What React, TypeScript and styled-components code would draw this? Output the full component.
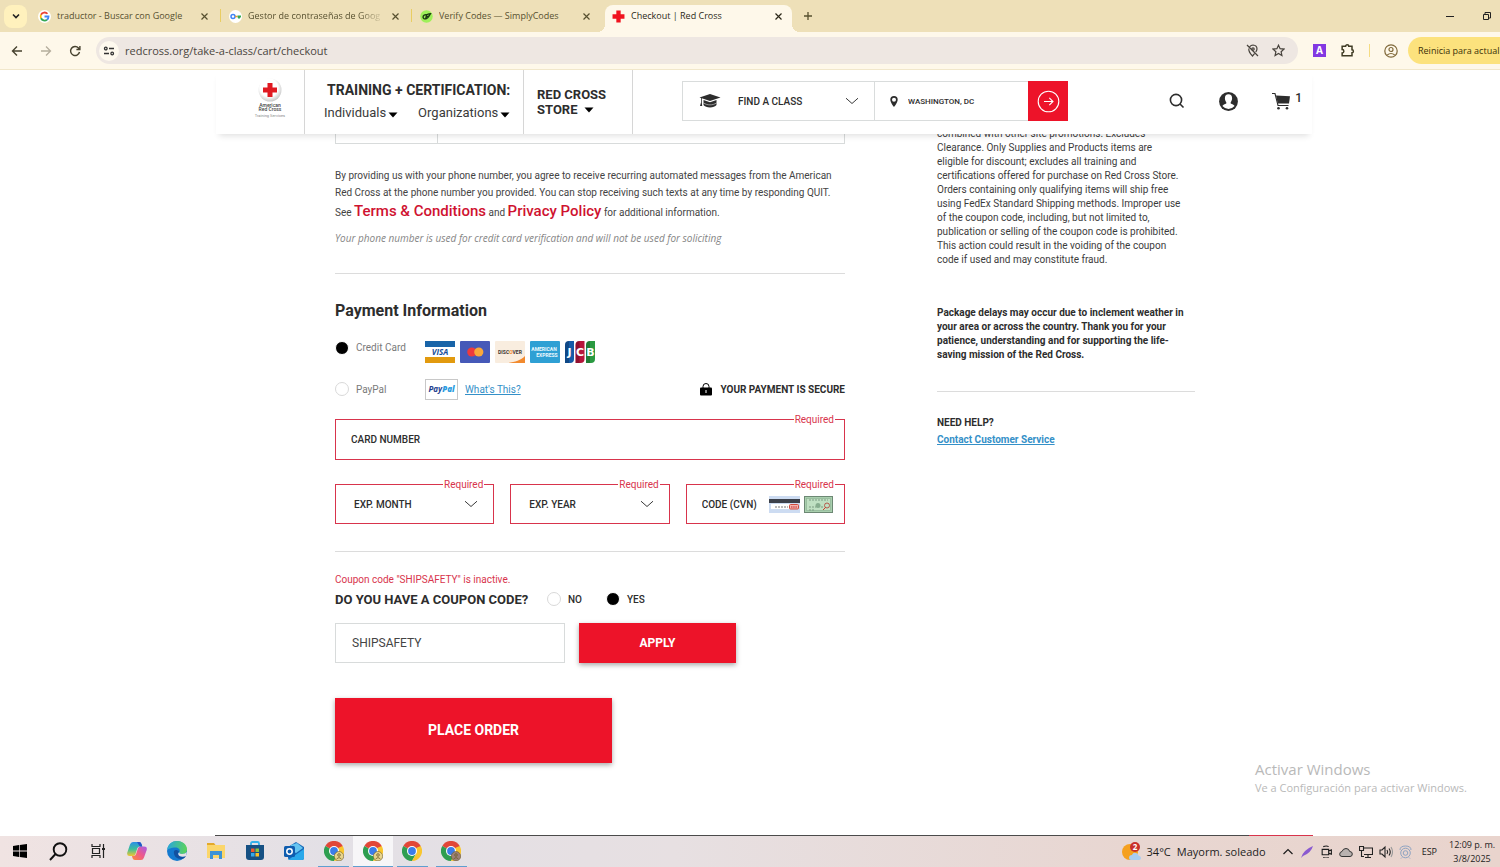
import React from "react";
import styled, { createGlobalStyle, css } from "styled-components";

const ui = `"Open Sans", "Noto Sans", sans-serif`;
const red = "#ed1329";
const errorRed = "#d8344c";
const ink = "#2d2d2d";

const GlobalStyle = createGlobalStyle`
  *, *::before, *::after { box-sizing: border-box; }
  body { margin: 0; background: #fff; font-family: Roboto, sans-serif; color: ${ink}; }
  button, input, select { font: inherit; color: inherit; }
  button { border: 0; padding: 0; background: none; cursor: pointer; }
  h1, h2, p, fieldset { margin: 0; padding: 0; border: 0; }
  svg { display: block; flex: none; }
`;

const Screen = styled.div`
  display: flex;
  flex-direction: column;
  height: 100vh;
  overflow: hidden;
`;

/* Browser chrome */

const TabStrip = styled.div`
  display: flex;
  align-items: center;
  height: 32px;
  flex: none;
  padding: 0 8px 0 4px;
  background: #eee0b8;
  font: 9px/14px ${ui};
  color: #57502f;
`;

const TabMenu = styled.button`
  display: grid;
  place-items: center;
  width: 23px;
  height: 23px;
  border-radius: 8px;
  background: #fff1bd;
  margin-right: 3px;
`;

const TabList = styled.div`
  display: flex;
  flex: 0 1 762px;
  align-self: stretch;
  align-items: flex-end;
`;

const Tab = styled.div<{ $active?: boolean }>`
  position: relative;
  display: flex;
  align-items: center;
  gap: 6px;
  flex: 1 1 0;
  min-width: 0;
  height: 27px;
  padding: 0 11px 5px 8px;
  ${(p) =>
    p.$active &&
    css`
      flex: 0 1 187px;
      margin-left: 3px;
      padding: 0 9px 5px 7px;
      background: #fef8ea;
      border-radius: 8px 8px 0 0;
      color: #2c2818;
      &::before,
      &::after {
        content: "";
        position: absolute;
        bottom: 0;
        width: 8px;
        height: 8px;
      }
      &::before {
        left: -8px;
        background: radial-gradient(circle at 0 0, transparent 8px, #fef8ea 8px);
      }
      &::after {
        right: -8px;
        background: radial-gradient(circle at 100% 0, transparent 8px, #fef8ea 8px);
      }
    `}
`;

const TabTitle = styled.span<{ $fade?: boolean }>`
  flex: 1;
  white-space: nowrap;
  overflow: hidden;
  ${(p) =>
    p.$fade && "mask-image: linear-gradient(90deg, #000 110px, transparent 137px);"}
`;

const TabDivider = styled.span`
  width: 1px;
  height: 13px;
  margin-bottom: 10px;
  background: #e9cd62;
`;

const NewTab = styled.button`
  margin-left: 7px;
  padding: 4px;
`;

const WindowButtons = styled.div`
  display: flex;
  gap: 27px;
  margin-left: auto;
`;

const Toolbar = styled.div`
  display: flex;
  align-items: center;
  flex: none;
  height: 38px;
  padding-left: 11px;
  background: #fef8ea;
  border-bottom: 1px solid #f1e7cb;
  font-family: ${ui};
`;

const NavButtons = styled.div`
  display: flex;
  gap: 17px;
  margin-right: 15px;
`;

const Omnibox = styled.div`
  display: flex;
  align-items: center;
  flex: 1;
  gap: 6px;
  height: 27px;
  padding: 0 13px 0 3px;
  border-radius: 14px;
  background: #eee7e2;
`;

const SiteInfo = styled.button`
  display: grid;
  place-items: center;
  width: 20px;
  height: 20px;
  border-radius: 50%;
  background: #fef9ee;
`;

const Address = styled.input`
  flex: 1;
  min-width: 0;
  border: 0;
  padding: 0;
  background: transparent;
  font-size: 11px;
  color: #4b4640;
  outline: 0;
`;

const OmniActions = styled.div`
  display: flex;
  gap: 13px;
`;

const Extensions = styled.div`
  display: flex;
  align-items: center;
  gap: 14px;
  padding: 0 10px 0 15px;
`;

const ExtensionBadge = styled.button`
  width: 13px;
  height: 13px;
  background: #8338e2;
  color: #fff;
  font: 700 10px/13px ${ui};
`;

const ToolbarDivider = styled.span`
  width: 1px;
  height: 13px;
  background: #f5dc83;
`;

const Restart = styled.button`
  height: 27px;
  width: 92px;
  padding-left: 10px;
  border-radius: 14px 0 0 14px;
  background: #fce27d;
  font-size: 9px;
  text-align: left;
  white-space: nowrap;
  color: #3b3108;
`;

/* Site */

const Site = styled.div`
  position: relative;
  flex: 1;
  min-height: 0;
  display: flex;
  flex-direction: column;
  padding-left: 28px;
  overflow: hidden;
`;

const SiteHeader = styled.header`
  position: relative;
  z-index: 1;
  display: flex;
  flex: none;
  width: 100%;
  max-width: 1096px;
  height: 64px;
  margin: 0 auto;
  background: #fff;
  box-shadow: 0 5px 6px -3px rgba(0, 0, 0, 0.12);
`;

const Logo = styled.a`
  display: flex;
  flex-direction: column;
  align-items: center;
  width: 88px;
  padding: 8px 0 0 20px;
`;

const NavBlock = styled.div`
  width: 219px;
  padding: 11px 0 0 19px;
  border-left: 1px solid #d6d6d6;
`;

const NavHeading = styled.div`
  padding-left: 3px;
  font: 700 14px/18px Roboto, sans-serif;
  white-space: nowrap;
`;

const NavLinks = styled.div`
  display: flex;
  gap: 20px;
  margin-top: 5px;
`;

const NavButton = styled.button`
  display: flex;
  align-items: center;
  gap: 2px;
  font-size: 13px;
  line-height: 18px;
  color: #3a3a3a;
  svg { margin-top: 3px; }
`;

const StoreButton = styled.button`
  width: 110px;
  padding: 0 13px;
  border: solid #d6d6d6;
  border-width: 0 1px;
  text-align: left;
  font-size: 13px;
  font-weight: 700;
  line-height: 15px;
  white-space: nowrap;
  svg { display: inline-block; margin: 0 0 1px 3px; }
`;

const ClassSearch = styled.form`
  display: flex;
  align-items: stretch;
  width: 386px;
  height: 40px;
  margin: 11px 0 0 49px;
`;

const SearchPart = styled.label<{ $width: number }>`
  display: flex;
  align-items: center;
  width: ${(p) => p.$width}px;
  padding: 0 15px;
  border: solid #d9dcdc;
  border-width: 1px 0 1px 1px;
`;

const ClassSelect = styled.select`
  flex: 1;
  appearance: none;
  border: 0;
  padding: 0 0 0 16px;
  background: transparent;
  font-size: 10px;
  font-weight: 500;
  outline: 0;
`;

const PlaceInput = styled.input`
  width: 100%;
  border: 0;
  padding: 0 0 0 10px;
  background: transparent;
  font-size: 8px;
  font-weight: 500;
  outline: 0;
`;

const SearchButton = styled.button`
  display: grid;
  place-items: center;
  width: 40px;
  background: ${red};
`;

const HeaderIcons = styled.div`
  display: flex;
  align-items: flex-start;
  gap: 34px;
  margin: 22px 10px 0 auto;
`;

const CartButton = styled.button`
  display: flex;
  gap: 4px;
  font-size: 12px;
  font-weight: 500;
  line-height: 12px;
`;

const Content = styled.div`
  display: flex;
  justify-content: space-between;
  flex: 1;
  width: 100%;
  max-width: 1096px;
  margin: -8px auto 0;
  padding: 0 117px 0 119px;
`;

const Main = styled.main`
  width: 510px;
  font-size: 10px;
  line-height: 17px;
`;

const PhoneField = styled.div`
  display: flex;
  height: 18px;
  border: 1px solid #d8dbdb;
  border-top: 0;
  &::before {
    content: "";
    width: 102px;
    border-right: 1px solid #d8dbdb;
  }
`;

const Consent = styled.p`
  margin-top: 23px;
  white-space: nowrap;
  color: #444;
`;

const TermsLink = styled.a`
  font-size: 15px;
  font-weight: 500;
  line-height: 20px;
  color: #cf1230;
  text-decoration: none;
`;

const PhoneNote = styled.p`
  margin: 9px 0 26px;
  font: italic 10px/17px ${ui};
  color: #858585;
`;

const Divider = styled.hr`
  height: 1px;
  border: 0;
  margin: 0;
  background: #dcdcdc;
`;

const Title = styled.h2`
  margin: 27px 0 20px;
  font-size: 16px;
  line-height: 20px;
`;

const CardRow = styled.div`
  display: flex;
  align-items: flex-start;
  height: 22px;
  line-height: 14px;
`;

const PaypalRow = styled.div`
  display: flex;
  align-items: center;
  height: 22px;
  margin: 15px 0 19px;
`;

const Choice = styled.label<{ $width: number }>`
  display: flex;
  align-items: center;
  gap: 7px;
  width: ${(p) => p.$width}px;
`;

const PaymentChoice = styled(Choice)`
  color: #7a7a7a;
`;

const Radio = styled.input.attrs({ type: "radio" })`
  appearance: none;
  width: 14px;
  height: 14px;
  margin: 0;
  border: 1px solid #d9d9d9;
  border-radius: 50%;
  background: #fff;
  &:checked {
    border-color: #fff;
    background: #000;
  }
`;

const Cards = styled.div`
  display: flex;
  gap: 5px;
`;

const PaypalBadge = styled.span`
  width: 33px;
  height: 21px;
  margin-right: 7px;
  border: 1px solid #c8c8c8;
  font: italic 700 8px/18px ${ui};
  text-align: center;
  color: #1e3f8f;
  b { color: #2a9be0; }
`;

const BlueLink = styled.a`
  color: #3490c8;
  text-decoration: underline;
`;

const Secure = styled.strong`
  display: flex;
  align-items: center;
  gap: 8px;
  margin-left: auto;
`;

const FieldRow = styled.div`
  display: grid;
  grid-template-columns: repeat(3, minmax(0, 1fr));
  gap: 16px;
  margin: 24px 0 27px;
`;

const Field = styled.div<{ $select?: boolean }>`
  position: relative;
  display: flex;
  align-items: center;
  height: ${(p) => (p.$select === undefined ? 41 : 40)}px;
  padding: ${(p) => (p.$select ? "0 15px 0 18px" : "0 11px 0 15px")};
  border: 1px solid ${errorRed};
`;

const Required = styled.label`
  position: absolute;
  top: -9px;
  right: 9px;
  padding: 0 1px;
  background: #fff;
  color: ${errorRed};
`;

const fieldText = css`
  flex: 1;
  min-width: 0;
  border: 0;
  padding: 0;
  background: transparent;
  font-weight: 500;
  outline: 0;
`;

const TextInput = styled.input`
  ${fieldText}
  &::placeholder { color: ${ink}; opacity: 1; }
`;

const Select = styled.select`
  ${fieldText}
  appearance: none;
`;

const CodeCards = styled.div`
  display: flex;
  gap: 4px;
`;

const CouponError = styled.p`
  margin-top: 19px;
  color: ${errorRed};
`;

const CouponQuestion = styled.fieldset`
  display: flex;
  align-items: center;
  height: 22px;
  font-weight: 500;
`;

const Question = styled.span`
  width: 212px;
  font-size: 13px;
  font-weight: 700;
`;

const CouponForm = styled.form`
  display: flex;
  gap: 14px;
  margin-top: 13px;
`;

const CouponInput = styled.input`
  width: 230px;
  height: 40px;
  padding: 0 16px;
  border: 1px solid #d8dbdb;
  font-size: 12px;
  color: #444;
  outline: 0;
`;

const RedButton = styled.button<{ $large?: boolean }>`
  width: ${(p) => (p.$large ? 277 : 157)}px;
  height: ${(p) => (p.$large ? 65 : 40)}px;
  background: ${red};
  box-shadow: 0 2px 5px rgba(0, 0, 0, 0.35);
  color: #fff;
  font-size: ${(p) => (p.$large ? 14 : 12)}px;
  font-weight: 700;
`;

const Order = styled.div`
  margin-top: 35px;
`;

const Aside = styled.aside`
  width: 258px;
  padding-top: 1px;
  font-size: 10px;
  line-height: 14px;
  white-space: nowrap;
`;

const Policy = styled.p`
  color: #3c3c3c;
  margin-bottom: 39px;
`;

const Delay = styled.p`
  font-weight: 700;
  margin-bottom: 29px;
`;

const Help = styled.div`
  margin-top: 22px;
  font-weight: 700;
  line-height: 17px;
`;

const SiteFooter = styled.footer`
  flex: none;
  width: 100%;
  max-width: 1098px;
  height: 1px;
  margin: 0 auto;
  background: linear-gradient(90deg, #4b4b4b calc(100% - 64px), #d8344c calc(100% - 64px));
`;

const Watermark = styled.div`
  position: absolute;
  right: 24px;
  bottom: 40px;
  width: 221px;
  font: 11px/17px ${ui};
  color: #b9b9b9;
  strong {
    display: block;
    font-size: 15px;
    font-weight: 400;
    line-height: 20px;
  }
`;

/* Taskbar */

const Taskbar = styled.footer`
  display: flex;
  align-items: stretch;
  justify-content: space-between;
  flex: none;
  height: 31px;
  padding-right: 5px;
  background: linear-gradient(90deg, #f0e3e2, #e3e0e6 22%, #e7e0e2 45%, #e8d6d1 75%, #e9d4cd);
  font: 11px/14px ${ui};
  color: #1d1d1d;
`;

const Apps = styled.div`
  display: grid;
  grid-template-columns: repeat(12, 1fr);
  width: 471px;
`;

const TaskButton = styled.button<{ $open?: boolean; $active?: boolean }>`
  display: grid;
  place-items: center;
  background: ${(p) => (p.$active ? "#f7f6f8" : "none")};
  border-bottom: 1px solid ${(p) => (p.$open ? "#5f9fd0" : "transparent")};
  margin: 0 ${(p) => (p.$open && !p.$active ? 4 : 0)}px;
`;

const Tray = styled.div`
  display: flex;
  align-items: center;
  white-space: nowrap;
`;

const Weather = styled.button`
  display: flex;
  align-items: center;
  gap: 6px;
  margin-right: 16px;
`;

const TrayIcons = styled.div`
  display: flex;
  align-items: center;
  gap: 6px;
  margin-right: 10px;
`;

const Language = styled.button`
  margin-right: 12px;
  font-size: 9px;
`;

const Clock = styled.div`
  width: 46px;
  font-size: 9px;
  text-align: center;
`;

/* Icons */

type LineProps = { d: string; size?: number; box?: number; color?: string; w?: number };
const Line = ({ d, size = 12, box = 12, color = "currentColor", w = 1.2 }: LineProps) => (
  <svg width={size} height={size} viewBox={`0 0 ${box} ${box}`} fill="none" stroke={color} strokeWidth={w} aria-hidden>
    <path d={d} />
  </svg>
);

const Close = () => (
  <button aria-label="Cerrar pestaña">
    <Line d="M1.5 1.5l6 6M7.5 1.5l-6 6" size={9} box={9} />
  </button>
);

const Caret = () => (
  <svg width="10" height="6" viewBox="0 0 10 6" aria-hidden><path d="M.5.5h9L5 5.5z" fill="#000" /></svg>
);

const ThinChevron = () => (
  <svg width="14" height="8" viewBox="0 0 14 8" fill="none" stroke="#3a3a3a" aria-hidden>
    <path d="M1 1.2l6 5.3 6-5.3" />
  </svg>
);

const GoogleIcon = () => (
  <svg width="13" height="13" viewBox="0 0 26 26" fill="none" strokeWidth="3.6" aria-hidden>
    <circle cx="13" cy="13" r="13" fill="#fff" />
    <path d="M19 7.5A8 8 0 0 0 6 9.5" stroke="#ea4335" />
    <path d="M6 9.5a8 8 0 0 0 0 7" stroke="#fbbc05" />
    <path d="M6 16.5a8 8 0 0 0 12 3" stroke="#34a853" />
    <path d="M13 13h8a8 8 0 0 1-3 6.5" stroke="#4285f4" />
  </svg>
);

const KeyIcon = () => (
  <svg width="13" height="13" viewBox="0 0 26 26" aria-hidden>
    <circle cx="13" cy="13" r="13" fill="#fff" />
    <circle cx="8" cy="13" r="4" fill="none" stroke="#4285f4" strokeWidth="3" />
    <path d="M12 13h5" stroke="#ea9a2b" strokeWidth="3" />
    <path d="M17 13h7M20 13v4" stroke="#34a853" strokeWidth="4" />
  </svg>
);

const SimplyIcon = () => (
  <svg width="13" height="13" viewBox="0 0 26 26" aria-hidden>
    <circle cx="13" cy="13" r="12.5" fill="#9ff05a" />
    <path d="M14 9.5q-7-1-8 4.5 1 5 6 3.500 4-1 6-5l3-5q-6 0-8 3l-1 4 6-3" fill="none" stroke="#1d3b12" strokeWidth="2.6" />
  </svg>
);

const Cross = () => (
  <svg width="13" height="13" viewBox="0 0 12 12" aria-hidden><path d="M4 .5h4V4h3.5v4H8v3.5H4V8H.5V4H4z" fill="#f0131f" /></svg>
);

const Medallion = () => (
  <svg width="32" height="41" viewBox="0 0 32 41" aria-hidden>
    <defs>
      <radialGradient id="disc" cx=".45" cy=".4" r=".6">
        <stop offset=".65" stopColor="#fff" /><stop offset="1" stopColor="#c9c9c9" />
      </radialGradient>
    </defs>
    <circle cx="16" cy="12" r="11.5" fill="url(#disc)" />
    <path d="M13.5 5h5v4.5H23v5h-4.5V19h-5v-4.500H9v-5h4.500z" fill="#e01a22" />
    <g textAnchor="middle" fontFamily="Roboto, sans-serif" fill="#444">
      <text x="16" y="29" fontSize="5" fontWeight="500">American</text>
      <text x="16" y="33" fontSize="5" fontWeight="500">Red Cross</text>
      <text x="16" y="39" fontSize="4" fill="#888">Training Services</text>
    </g>
  </svg>
);

const GradCap = () => (
  <svg width="24" height="16" viewBox="-1 0 24 16" fill={ink} aria-hidden>
    <path d="M11 1L.5 4.5 11 8l10.500-3.500z" />
    <path d="M4.500 7v5c2 3.300 11 3.300 13 0V7L11 9.300z" />
    <path d="M2 5v4.500L1 13h2.200L2.800 9.500V5z" />
    <path d="M4.500 10c4 2.500 9 2.500 13 0" stroke="#fff" strokeWidth=".5" fill="none" />
  </svg>
);

const Pin = () => (
  <svg width="8" height="11" viewBox="0 0 8 11" aria-hidden>
    <path d="M4 0a3.700 3.700 0 0 0-3.700 3.700C.3 6.500 4 11 4 11s3.700-4.500 3.700-7.300A3.700 3.700 0 0 0 4 0zm0 1.700a2 2 0 1 1 0 4 2 2 0 0 1 0-4z" fill={ink} />
  </svg>
);

const CircleArrow = () => (
  <svg width="23" height="23" viewBox="0 0 23 23" fill="none" stroke="#fff" strokeWidth="1.1" aria-hidden>
    <circle cx="11.5" cy="11.5" r="10.3" /><path d="M7 11.500h9M12.300 7.800l3.700 3.700-3.700 3.700" />
  </svg>
);

const SearchIcon = () => (
  <svg width="17" height="17" viewBox="0 0 17 17" fill="none" stroke={ink} strokeWidth="1.6" aria-hidden>
    <circle cx="8" cy="8" r="5.6" /><path d="M12 12l3.500 3.500" />
  </svg>
);

const UserIcon = () => (
  <svg width="19" height="19" viewBox="0 0 19 19" aria-hidden>
    <circle cx="9.5" cy="9.5" r="9.4" fill={ink} />
    <path d="M9.500 2.300c2.400 0 3.600 1.600 3.600 4 0 1.800-.7 3-1.400 3.900v1.400c1.500.6 3.300 1.200 3.900 2.500a8 8 0 0 1-12.200 0c.6-1.300 2.400-1.900 3.900-2.500v-1.400C6.600 9.300 5.900 8.100 5.900 6.300c0-2.400 1.200-4 3.600-4z" fill="#fff" />
  </svg>
);

const CartIcon = () => (
  <svg width="19" height="18" viewBox="0 0 19 18" aria-hidden>
    <path d="M4 3.500l14 .7-1 7.300H5.800z" fill={ink} />
    <path d="M0 1.500h3l3 12h10.500" fill="none" stroke={ink} strokeWidth="1.1" />
    <circle cx="6.5" cy="16.3" r="1.3" fill={ink} /><circle cx="15" cy="16.3" r="1.3" fill={ink} />
  </svg>
);

const CardArt = ({ label, children }: { label: string; children: React.ReactNode }) => (
  <svg width="30" height="22" viewBox="0 0 30 22" role="img" aria-label={label}>{children}</svg>
);

const CardLogos = () => (
  <Cards>
    <CardArt label="Visa">
      <rect width="30" height="22" fill="#fff" /><rect width="30" height="6" fill="#1864a8" /><rect y="16" width="30" height="6" fill="#e29a0e" />
      <text x="15" y="14" fontSize="8" fontWeight="700" fontStyle="italic" textAnchor="middle" fill="#174f99" fontFamily="Open Sans, sans-serif">VISA</text>
    </CardArt>
    <CardArt label="Mastercard">
      <rect width="30" height="22" rx="1" fill="#4659b8" /><circle cx="11.8" cy="11" r="4.6" fill="#ee3a3c" /><circle cx="18.8" cy="11" r="4.6" fill="#f9a83a" />
    </CardArt>
    <CardArt label="Discover">
      <rect width="30" height="22" rx="1" fill="#f9eddf" /><path d="M30 15v7H13c7-1 13-3 17-7z" fill="#f28a2e" />
      <text x="15" y="13" fontSize="5" fontWeight="700" textAnchor="middle" fill="#3c3430" fontFamily="Roboto, sans-serif">DISC<tspan fill="#f28a2e">O</tspan>VER</text>
    </CardArt>
    <CardArt label="American Express">
      <rect width="30" height="22" rx="1" fill="#2fa0d4" />
      <g fontSize="5" fontWeight="700" fill="#eefaff" textAnchor="middle" fontFamily="Roboto, sans-serif">
        <text x="14" y="10">AMERICAN</text><text x="17" y="16">EXPRESS</text>
      </g>
    </CardArt>
    <CardArt label="JCB">
      <path d="M0 4q0-4 4-4h5v18q0 4-4 4H0z" fill="#155aa8" /><path d="M10.500 4q0-4 4-4h5v18q0 4-4 4h-5z" fill="#b5153b" /><path d="M21 4q0-4 4-4h5v18q0 4-4 4h-5z" fill="#2a9a41" />
      <path d="M0 4q0-4 4-4v22H0zM10.500 4q0-4 4-4v22h-4zM21 4q0-4 4-4v22h-4z" fill="#000" opacity=".2" />
      <g fontSize="11" fontWeight="700" fill="#fff" textAnchor="middle" fontFamily="DejaVu Sans, sans-serif"><text x="4.5" y="15">J</text><text x="15" y="15">C</text><text x="25.5" y="15">B</text></g>
    </CardArt>
  </Cards>
);

const LockIcon = () => (
  <svg width="12" height="13" viewBox="0 0 12 13" aria-hidden>
    <path d="M3 6V3.500a3 3 0 0 1 6 0V6" fill="none" stroke="#000" /><rect y="4.5" width="12" height="8" rx="1" fill="#000" />
    <path d="M5.500 7h1v3h-1z" fill="#fff" />
  </svg>
);

const CodeArt = () => (
  <CodeCards>
    <svg width="31" height="17" viewBox="0 0 31 17" aria-hidden>
      <rect width="31" height="17" fill="#cddcf2" /><rect y="3" width="31" height="4" fill="#3c414b" /><rect x="2" y="8" width="26" height="5" fill="#fff" />
      <path d="M6 11h13" stroke="#777" strokeDasharray="2 1" /><rect x="20.5" y="8.5" width="9" height="4.5" rx="1" fill="#f5b5ad" stroke="#d04a3e" /><path d="M22 11h6" stroke="#b23" strokeDasharray="1.5 .7" />
    </svg>
    <svg width="29" height="17" viewBox="0 0 29 17" aria-hidden>
      <rect x=".5" y=".5" width="28" height="16" fill="#a9cfae" stroke="#6d8874" /><rect x="2.5" y="2.5" width="24" height="12" fill="#bfe0c2" stroke="#8fb596" strokeWidth=".7" />
      <path d="M5 4h19M5 11h7M17 11h3M5 14h6" stroke="#7d9c83" strokeDasharray="2 1" /><circle cx="14" cy="9.5" r="2.5" fill="#86ad8e" />
      <circle cx="23" cy="9.5" r="2.5" fill="none" stroke="#b55a4d" /><path d="M19 14l3-3" stroke="#c9402f" />
    </svg>
  </CodeCards>
);

const Chrome = ({ badge }: { badge?: string }) => (
  <svg width="20" height="20" viewBox="0 0 20 20" aria-hidden>
    <path d="M1.300 5A10 10 0 0 1 18.700 5L10 10z" fill="#e14638" />
    <path d="M1.300 5A10 10 0 0 0 10 20l4.500-8L10 10z" fill="#2e9e50" />
    <path d="M18.700 5A10 10 0 0 1 10 20l4.300-7.500V5z" fill="#f9c62f" />
    <path d="M10 5h8.700L14 7z" fill="#e14638" />
    <circle cx="10" cy="10" r="5" fill="#fff" /><circle cx="10" cy="10" r="3.9" fill="#3b7de9" />
    {badge && (
      <g>
        <circle cx="15" cy="15.2" r="4.7" fill={badge} stroke="#6e5d28" strokeWidth=".6" />
        <circle cx="15" cy="14" r="1.3" fill="none" stroke="#6e5d28" strokeWidth=".8" />
        <path d="M12.700 17.800q2.300-2.500 4.600 0" fill="none" stroke="#6e5d28" strokeWidth=".8" />
      </g>
    )}
  </svg>
);

const apps: { name: string; icon: React.ReactNode; open?: boolean; active?: boolean }[] = [
  { name: "Inicio", icon: <svg width="14" height="14" viewBox="0 0 14 14"><path d="M0 2l6-.9v5.500H0zM6.700 1L14 0v6.600H6.700zM0 7.400h6v5.500L0 12zM6.700 7.400H14V14l-7.300-1z" /></svg> },
  { name: "Buscar", icon: <svg width="19" height="19" viewBox="0 0 19 19" fill="none" stroke="#111" strokeWidth="1.9"><circle cx="11" cy="7.5" r="6.3" /><path d="M6.500 12L1 18" /></svg> },
  { name: "Vista de tareas", icon: <svg width="15" height="14" viewBox="0 0 15 14" fill="none" stroke="#222" strokeWidth="1.2"><path d="M1 0v2.500h8V0M1 14v-2.500h8V14M1.500 4.500h7v5h-7zM12.500 0v14" /><path d="M11 4h3v2h-3z" fill="#222" stroke="none" /></svg> },
  { name: "Copilot", icon: (
    <svg width="20" height="18" viewBox="0 0 20 18">
      <defs>
        <linearGradient id="copA" x1="0" y1="0" x2="0" y2="1"><stop stopColor="#2a8fe8" /><stop offset=".5" stopColor="#3bbf9a" /><stop offset="1" stopColor="#f2c531" /></linearGradient>
        <linearGradient id="copB" x1="1" y1="0" x2="0" y2="1"><stop stopColor="#a45ce8" /><stop offset=".5" stopColor="#ef5a8b" /><stop offset="1" stopColor="#fb8a3a" /></linearGradient>
      </defs>
      <path d="M6 0h6q2 0 2.500 2l.8 2.500h-2.500q-2 0-2.600 2L8.500 12q-.6 2-2.500 2H2.500Q-.5 14 .3 10.500L3 2.500Q3.800 0 6 0z" fill="url(#copA)" />
      <path d="M14 18H8q-2 0-2.500-2L5 14h1.500q2 0 2.600-2l1.800-5.500q.6-2 2.500-2H17q3.500 0 2.700 3.500L17 15.500q-.8 2.500-3 2.500z" fill="url(#copB)" />
      <path d="M10 0h2q2 0 2.500 2l.8 2.500h-2.500z" fill="#2456c8" />
    </svg>) },
  { name: "Edge", icon: (
    <svg width="20" height="20" viewBox="0 0 20 20">
      <defs><linearGradient id="edge" x1="0" y1=".3" x2="1" y2=".4"><stop stopColor="#2aa6dd" /><stop offset="1" stopColor="#5bd35b" /></linearGradient></defs>
      <circle cx="10" cy="10" r="10" fill="#1479cf" />
      <path d="M0 9C1 3 5 0 10 0c6 0 10 4 10 8.500 0 3-2 4.500-5 4.500-2.500 0-3-1-2.500-2 1-2-.5-4.500-4-4.500C4.500 6.500 1 8 0 9z" fill="url(#edge)" />
      <path d="M7 10c-1 5 3 8 7 8 2 0 4-1 5-3-3 1.500-8 1-8-2.500 0-1 .5-1.500 1-2-1.500-2-4-2-5-.5z" fill="#12509f" />
      <path d="M12.500 11c-.5 1 0 2 2.500 2 2 0 4-.7 4.700-2l-.5 4c-3 1.500-8 1-8-2.500z" fill="#e7e1e6" />
    </svg>) },
  { name: "Explorador", icon: <svg width="18" height="16" viewBox="0 0 18 16"><path d="M0 0h7l1.500 2H0z" fill="#e3a92b" /><path d="M0 2h18v13H0z" fill="#fbd66b" /><path d="M3 8h12v8h-3v-4H6v4H3z" fill="#3d93d6" /></svg> },
  { name: "Tienda", icon: (
    <svg width="20" height="20" viewBox="0 0 20 20"><path d="M6 5V2.500Q6 1 7.500 1h5Q14 1 14 2.500V5" fill="none" stroke="#35b1ea" strokeWidth="1.8" /><path d="M1 4h18v12q0 3-3 3H4q-3 0-3-3z" fill="#165083" />
      <path d="M6 7.500h3.500V11H6z" fill="#f0582c" /><path d="M10.500 7.500H14V11h-3.500z" fill="#86c440" /><path d="M6 12h3.500v3.500H6z" fill="#35a9ea" /><path d="M10.500 12H14v3.500h-3.500z" fill="#fcbf24" /></svg>) },
  { name: "Outlook", icon: (
    <svg width="20" height="18" viewBox="0 0 20 18"><path d="M4 5l8-5 8 5v11q0 2-2 2H6q-2 0-2-2z" fill="#1668b8" /><path d="M7 3l6-2 6 5-7 5-6-3z" fill="#66c5f1" /><path d="M4 18l16-11v9q0 2-2 2z" fill="#2aa8ea" />
      <rect y="4" width="11" height="11" rx="1.5" fill="#0f5cae" /><circle cx="5.5" cy="9.5" r="2.7" fill="none" stroke="#fff" strokeWidth="1.5" /></svg>) },
  { name: "Chrome, perfil 1", icon: <Chrome badge="#e8d48c" />, open: true },
  { name: "Chrome, perfil 2", icon: <Chrome badge="#e8d48c" />, open: true, active: true },
  { name: "Chrome", icon: <Chrome />, open: true },
  { name: "Chrome, perfil 3", icon: <Chrome badge="#9c8078" />, open: true },
];

const PinOff = () => (
  <svg width="13" height="13" viewBox="0 0 13 13" fill="none" stroke="#47423c" strokeWidth="1.2" aria-hidden>
    <path d="M3.500 3Q5 1 7 1q4 .3 4 4-.2 1.500-1.200 3M2.800 4.500Q2.500 8 6.500 12l2-2.300M1 1l11 11" /><circle cx="7" cy="5" r="1.2" />
  </svg>
);

const starPath = "M6.5 1.200l1.600 3.500 3.800.4-2.800 2.600.8 3.800-3.400-2-3.400 2 .8-3.800L1.100 5.100l3.800-.4z";

export default function App() {
  return (
    <Screen>
      <GlobalStyle />
      <TabStrip>
        <TabMenu aria-label="Buscar pestañas"><Line d="M1 2.500l3 3 3-3" size={8} box={8} w={1.6} color="#222" /></TabMenu>
        <TabList>
          <Tab><GoogleIcon /><TabTitle>traductor - Buscar con Google</TabTitle><Close /></Tab>
          <TabDivider />
          <Tab><KeyIcon /><TabTitle $fade>Gestor de contraseñas de Goog</TabTitle><Close /></Tab>
          <TabDivider />
          <Tab><SimplyIcon /><TabTitle>Verify Codes — SimplyCodes</TabTitle><Close /></Tab>
          <Tab $active><Cross /><TabTitle>Checkout | Red Cross</TabTitle><Close /></Tab>
        </TabList>
        <NewTab aria-label="Nueva pestaña"><Line d="M5 1v8M1 5h8" size={10} box={10} w={1.3} /></NewTab>
        <WindowButtons>
          <button aria-label="Minimizar"><Line d="M1 5.500h8" size={10} box={10} w={1} color="#222" /></button>
          <button aria-label="Restaurar"><Line d="M1.500 3.500h5v5h-5zM3 3.500v-2h5.500V7H6.500" size={10} box={10} w={1} color="#222" /></button>
        </WindowButtons>
      </TabStrip>
      <Toolbar>
        <NavButtons>
          <button aria-label="Atrás"><Line d="M11 6H1.500M6 1.500L1.500 6 6 10.500" color="#47422f" w={1.4} /></button>
          <button aria-label="Adelante"><Line d="M1 6h9.500M6 1.500L10.500 6 6 10.500" color="#b5ae9d" w={1.3} /></button>
          <button aria-label="Recargar"><Line d="M10.500 7A4.500 4.500 0 1 1 9.500 3L10.700 4.300M10.900 1v3.500H7.400" color="#47422f" w={1.4} /></button>
        </NavButtons>
        <Omnibox>
          <SiteInfo aria-label="Información del sitio">
            <Line d="M6 3.500h5M1 8.500h5M1.500 3.500a1.300 1.300 0 1 0 2.600 0 1.300 1.300 0 1 0-2.600 0M7.900 8.500a1.300 1.300 0 1 0 2.600 0 1.300 1.300 0 1 0-2.600 0" w={1.3} color="#333" />
          </SiteInfo>
          <Address aria-label="Dirección" defaultValue="redcross.org/take-a-class/cart/checkout" />
          <OmniActions>
            <button aria-label="Ubicación bloqueada"><PinOff /></button>
            <button aria-label="Favorito"><Line d={starPath} size={13} box={13} color="#47423c" /></button>
          </OmniActions>
        </Omnibox>
        <Extensions>
          <ExtensionBadge>A</ExtensionBadge>
          <button aria-label="Extensiones">
            <Line d="M2 3h3.200a1.500 1.300 0 0 1 3 0h3v3.200a1.300 1.500 0 0 1 0 3V12H2V9.300a1.600 1.600 0 0 0 0-3.200z" size={15} box={14} color="#3f3b25" w={1.4} />
          </button>
          <ToolbarDivider />
          <button aria-label="Perfil">
            <svg width="14" height="14" viewBox="0 0 14 14" fill="none" stroke="#80693a" strokeWidth="1.2">
              <circle cx="7" cy="7" r="6.2" /><circle cx="7" cy="5.5" r="2" /><path d="M3.300 11q3.700-3 7.400 0" />
            </svg>
          </button>
        </Extensions>
        <Restart>Reinicia para actual</Restart>
      </Toolbar>

      <Site>
        <SiteHeader>
          <Logo href="#" aria-label="American Red Cross Training Services"><Medallion /></Logo>
          <NavBlock>
            <NavHeading>TRAINING + CERTIFICATION:</NavHeading>
            <NavLinks>
              <NavButton>Individuals<Caret /></NavButton>
              <NavButton>Organizations<Caret /></NavButton>
            </NavLinks>
          </NavBlock>
          <StoreButton>RED CROSS<br />STORE <Caret /></StoreButton>
          <ClassSearch onSubmit={(e) => e.preventDefault()}>
            <SearchPart $width={192}>
              <GradCap />
              <ClassSelect aria-label="Find a class"><option>FIND A CLASS</option></ClassSelect>
              <ThinChevron />
            </SearchPart>
            <SearchPart $width={154}>
              <Pin />
              <PlaceInput aria-label="Location" defaultValue="WASHINGTON, DC" />
            </SearchPart>
            <SearchButton aria-label="Search classes"><CircleArrow /></SearchButton>
          </ClassSearch>
          <HeaderIcons>
            <button aria-label="Search"><SearchIcon /></button>
            <button aria-label="Account"><UserIcon /></button>
            <CartButton aria-label="Cart"><CartIcon />1</CartButton>
          </HeaderIcons>
        </SiteHeader>

        <Content>
          <Main>
            <PhoneField />
            <Consent>
              By providing us with your phone number, you agree to receive recurring automated messages from the American<br />
              Red Cross at the phone number you provided. You can stop receiving such texts at any time by responding QUIT.<br />
              See <TermsLink href="#">Terms &amp; Conditions</TermsLink> and <TermsLink href="#">Privacy Policy</TermsLink> for additional information.
            </Consent>
            <PhoneNote>Your phone number is used for credit card verification and will not be used for soliciting</PhoneNote>
            <Divider />
            <Title>Payment Information</Title>
            <CardRow>
              <PaymentChoice $width={90}><Radio name="payment" defaultChecked />Credit Card</PaymentChoice>
              <CardLogos />
            </CardRow>
            <PaypalRow>
              <PaymentChoice $width={90}><Radio name="payment" />PayPal</PaymentChoice>
              <PaypalBadge>Pay<b>Pal</b></PaypalBadge>
              <BlueLink href="#">What's This?</BlueLink>
              <Secure><LockIcon />YOUR PAYMENT IS SECURE</Secure>
            </PaypalRow>
            <Field>
              <Required htmlFor="card">Required</Required>
              <TextInput id="card" placeholder="CARD NUMBER" />
            </Field>
            <FieldRow>
              <Field $select>
                <Required htmlFor="month">Required</Required>
                <Select id="month"><option>EXP. MONTH</option></Select>
                <ThinChevron />
              </Field>
              <Field $select>
                <Required htmlFor="year">Required</Required>
                <Select id="year"><option>EXP. YEAR</option></Select>
                <ThinChevron />
              </Field>
              <Field $select={false}>
                <Required htmlFor="cvn">Required</Required>
                <TextInput id="cvn" placeholder="CODE (CVN)" />
                <CodeArt />
              </Field>
            </FieldRow>
            <Divider />
            <CouponError>Coupon code "SHIPSAFETY" is inactive.</CouponError>
            <CouponQuestion>
              <Question>DO YOU HAVE A COUPON CODE?</Question>
              <Choice $width={59}><Radio name="coupon" />NO</Choice>
              <Choice $width={59}><Radio name="coupon" defaultChecked />YES</Choice>
            </CouponQuestion>
            <CouponForm onSubmit={(e) => e.preventDefault()}>
              <CouponInput aria-label="Coupon code" defaultValue="SHIPSAFETY" />
              <RedButton>APPLY</RedButton>
            </CouponForm>
            <Order><RedButton $large>PLACE ORDER</RedButton></Order>
          </Main>
          <Aside>
            <Policy>
              combined with other site promotions. Excludes<br />
              Clearance. Only Supplies and Products items are<br />
              eligible for discount; excludes all training and<br />
              certifications offered for purchase on Red Cross Store.<br />
              Orders containing only qualifying items will ship free<br />
              using FedEx Standard Shipping methods. Improper use<br />
              of the coupon code, including, but not limited to,<br />
              publication or selling of the coupon code is prohibited.<br />
              This action could result in the voiding of the coupon<br />
              code if used and may constitute fraud.
            </Policy>
            <Delay>
              Package delays may occur due to inclement weather in<br />
              your area or across the country. Thank you for your<br />
              patience, understanding and for supporting the life-<br />
              saving mission of the Red Cross.
            </Delay>
            <Divider />
            <Help>NEED HELP?<br /><BlueLink href="#">Contact Customer Service</BlueLink></Help>
          </Aside>
        </Content>
        <SiteFooter />
        <Watermark><strong>Activar Windows</strong>Ve a Configuración para activar Windows.</Watermark>
      </Site>

      <Taskbar>
        <Apps>
          {apps.map((a) => (
            <TaskButton key={a.name} aria-label={a.name} $open={a.open} $active={a.active}>{a.icon}</TaskButton>
          ))}
        </Apps>
        <Tray>
          <Weather>
            <svg width="19" height="19" viewBox="0 0 19 19" aria-hidden>
              <circle cx="8" cy="10" r="8" fill="#f5a01f" /><path d="M7 16q0-3 3-3 1-3 4-2 2 0 2.500 2.500Q19 14 19 16q0 2-2 2H9q-2 0-2-2z" fill="#a9cdf2" />
              <circle cx="13" cy="5" r="5" fill="#c9302a" /><text x="13" y="8" fontSize="8" fontWeight="700" textAnchor="middle" fill="#fff" fontFamily="Open Sans, sans-serif">2</text>
            </svg>
            <span>34°C</span><span>Mayorm. soleado</span>
          </Weather>
          <TrayIcons>
            <Line d="M1.500 8L6 3.500 10.500 8" />
            <svg width="14" height="14" viewBox="0 0 14 14" aria-hidden><path d="M1 13Q3 5 13 1 11 8 3 11z" fill="#8a5ad0" /></svg>
            <Line d="M2 4h6v5H2zM8 5.500l2.500-1v4L8 7.500M3 1.500q3-1.200 5 0M3 11.500q3 1.200 5 0" size={13} w={1} />
            <svg width="14" height="14" viewBox="0 0 14 14" aria-hidden><path d="M3 11.500q-2.300 0-2.300-2.300T3 6.500Q4 3.500 7 3.500t3.700 3q2.600 0 2.600 2.500t-2.300 2.500z" fill="#b9b2b0" stroke="#333" /></svg>
            <svg width="14" height="14" viewBox="0 0 14 14" fill="none" stroke="#222" strokeWidth="1.1" aria-hidden><path d="M4 3h9.500v6.500H5M9 9.500V12M6 12.500h6M.5 1.500h4v4h-4zM2.500 5.500v6H5" /></svg>
            <svg width="14" height="14" viewBox="0 0 14 14" fill="none" stroke="#222" strokeWidth="1.1" aria-hidden><path d="M1 5h2l3-3v10L3 9H1zM8 5q1.300 2 0 4M10 3.500q2.500 3.500 0 7" /><path d="M12 2q3 5 0 10" stroke="#999" /></svg>
            <svg width="13" height="14" viewBox="0 0 13 14" fill="none" stroke="#8ea3c2" aria-hidden><circle cx="6.5" cy="8" r="4.8" /><circle cx="6.5" cy="8" r="2.3" /><path d="M1 5q0-4 5.500-4T12 5M3 12.500l-1 1M10 12.500l1 1" /></svg>
          </TrayIcons>
          <Language>ESP</Language>
          <Clock>12:09 p. m.<br />3/8/2025</Clock>
        </Tray>
      </Taskbar>
    </Screen>
  );
}
